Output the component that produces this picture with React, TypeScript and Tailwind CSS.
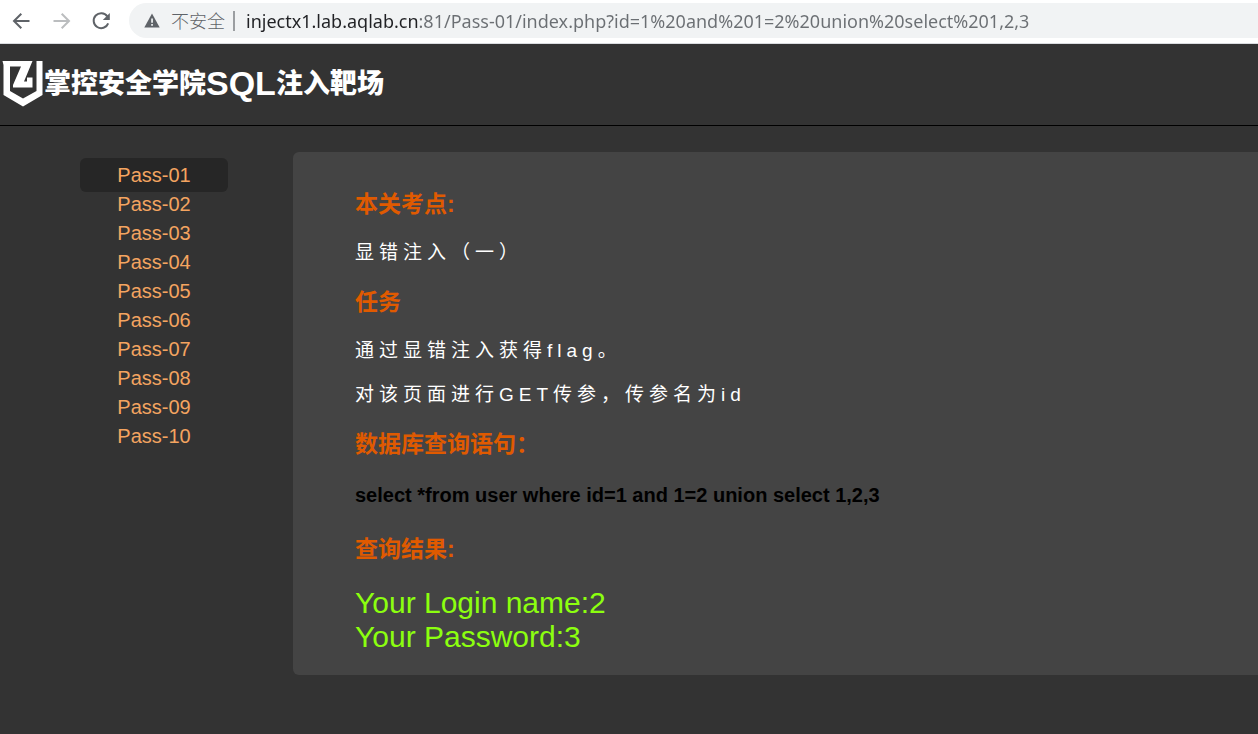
import React from "react";

const passes = [
  "Pass-01",
  "Pass-02",
  "Pass-03",
  "Pass-04",
  "Pass-05",
  "Pass-06",
  "Pass-07",
  "Pass-08",
  "Pass-09",
  "Pass-10",
];

function BrowserBar() {
  return (
    <div className="flex h-11 items-start border-b border-[#dadce0] bg-white pt-[3px] font-['Noto_Sans','Noto_Sans_CJK_SC',sans-serif]">
      <div className="flex h-[35px] items-center gap-4 pl-[9px]">
        <button type="button" aria-label="Back" className="flex size-6 items-center justify-center text-[#5f6368]">
          <svg viewBox="0 0 24 24" className="size-6" fill="none" stroke="currentColor" strokeWidth="2">
            <path d="M20.5 12H5M12.3 4.7L5 12l7.3 7.3" />
          </svg>
        </button>
        <button type="button" aria-label="Forward" className="flex size-6 items-center justify-center text-[#bbbdbf]">
          <svg viewBox="0 0 24 24" className="size-6" fill="none" stroke="currentColor" strokeWidth="2">
            <path d="M4.500 12H20M12.700 4.700L20 12l-7.300 7.300" />
          </svg>
        </button>
        <button type="button" aria-label="Reload" className="flex size-6 items-center justify-center text-[#5f6368]">
          <svg viewBox="0 0 24 24" className="size-6" fill="none">
            <path d="M18.300 7.300A7.500 7.500 0 1 0 19.200 14.300" stroke="currentColor" strokeWidth="2" />
            <path d="M20.800 4v7h-7z" fill="currentColor" />
          </svg>
        </button>
      </div>
      <div className="ml-4 flex h-[35px] flex-1 items-center rounded-l-full bg-[#f1f3f4] pl-[15px]">
        <svg viewBox="0 0 16 15" className="h-[15px] w-4 shrink-0">
          <path d="M8 0.500L15.700 14.500H0.300z" fill="#5f6368" />
          <path d="M7.200 5.500h1.700v4.300H7.200zM7.200 11h1.700v1.700H7.200z" fill="#f1f3f4" />
        </svg>
        <label
          htmlFor="address"
          className="ml-[11px] shrink-0 border-r-2 border-[#9b9ea1] pr-2 text-lg leading-5 text-[#5f6368]"
        >
          <span className="font-light">不安全</span>
        </label>
        <input
          id="address"
          type="text"
          spellCheck={false}
          defaultValue="injectx1.lab.aqlab.cn:81/Pass-01/index.php?id=1%20and%201=2%20union%20select%201,2,3"
          className="ml-[11px] min-w-0 flex-1 bg-[linear-gradient(to_right,#202124_172px,#6b6f73_172px)] bg-clip-text text-lg leading-7 text-transparent caret-black outline-none"
        />
      </div>
    </div>
  );
}

function Emblem() {
  return (
    <svg viewBox="0 0 42 48" className="h-12 w-[42px] shrink-0" fill="none">
      <path
        d="M0.500 1H30.500L22 21.500H25V17.500H30.500V27.500H11V25L19 6.500H8V31L21 38.500L34.500 31V1H40.500V35L21 46.500L1.500 35V5z"
        fill="#fff"
      />
    </svg>
  );
}

export default function App() {
  return (
    <div className="flex min-h-screen flex-col bg-[#333] font-['Liberation_Sans','Noto_Sans_CJK_SC',sans-serif]">
      <BrowserBar />
      <header className="flex h-[82px] items-center border-b border-black pb-[2px] pl-[2px]">
        <Emblem />
        <h1 className="flex items-center text-[27px] leading-8 font-black whitespace-nowrap text-white">
          <span>掌控安全学院</span>
          <span className="pb-[2px] text-[34px] font-bold">SQL</span>
          <span>注入靶场</span>
        </h1>
      </header>
      <div className="flex items-start pt-[26px]">
        <nav className="w-[293px] shrink-0 pt-[9px] pl-20">
          <ul>
            {passes.map((name, i) => (
              <li key={name} className="w-[148px] text-center text-xl leading-[29px] text-[#f4a460]">
                <a
                  href={"#" + name}
                  className={i === 0 ? "rounded-md bg-[#262626] px-[37px] py-[6px]" : ""}
                >
                  {name}
                </a>
              </li>
            ))}
          </ul>
        </nav>
        <main className="min-w-0 flex-1 rounded-l-md bg-[#444] pt-10 pb-[21px] pl-[62px]">
          <h2 className="text-[23px] leading-6 font-bold text-[#e05a00]">本关考点:</h2>
          <p className="mt-[25px] text-[19px] leading-6 tracking-[5px] text-white">显错注入（一）</p>
          <h2 className="mt-[25px] text-[23px] leading-6 font-bold text-[#e05a00]">任务</h2>
          <p className="mt-[25px] text-[19px] leading-6 tracking-[5px] text-white">通过显错注入获得flag。</p>
          <p className="mt-5 text-[19px] leading-6 tracking-[5px] text-white">对该页面进行GET传参，传参名为id</p>
          <h2 className="mt-[25px] text-[23px] leading-6 font-bold text-[#e05a00]">数据库查询语句：</h2>
          <p className="mt-[27px] text-xl leading-6 font-bold text-black">
            select *from user where id=1 and 1=2 union select 1,2,3
          </p>
          <h2 className="mt-[30px] text-[23px] leading-6 font-bold text-[#e05a00]">查询结果:</h2>
          <p className="mt-[25px] text-[30px] leading-[34px] text-[#8cff0f]">
            Your Login name:2
            <br />
            Your Password:3
          </p>
        </main>
      </div>
    </div>
  );
}
